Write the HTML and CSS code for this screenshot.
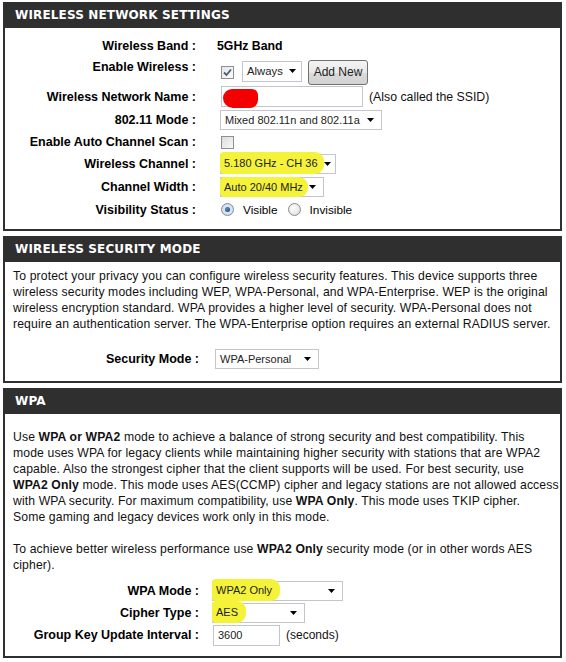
FILE: index.html
```
<!DOCTYPE html>
<html>
<head>
<meta charset="utf-8">
<link rel="stylesheet" href="styles.css">
</head>
<body>
<div class="page">

  <div class="section">
    <div class="head">WIRELESS NETWORK SETTINGS</div>
    <div class="body body-net">
      <div class="row h22">
        <div class="lbl">Wireless Band :</div>
        <div class="val"><b class="band">5GHz Band</b></div>
      </div>
      <div class="row h28 top">
        <div class="lbl lbl-top">Enable Wireless :</div>
        <div class="val val-enable">
          <span class="cb checked"><svg width="9" height="9" viewBox="0 0 9 9"><path d="M1 4.5 L3.5 7 L8 1.5" fill="none" stroke="#4a5a78" stroke-width="1.8"/></svg></span>
          <span class="sel w-always"><span class="t">Always</span><svg class="arr" width="7" height="4" viewBox="0 0 7 4"><path d="M0 0H7L3.5 4Z" fill="#000"/></svg></span>
          <span class="btn">Add New</span>
        </div>
      </div>
      <div class="row h23">
        <div class="lbl">Wireless Network Name :</div>
        <div class="val">
          <span class="inp w-ssid"><span class="redact"></span></span>
          <span class="note">(Also called the SSID)</span>
        </div>
      </div>
      <div class="row h23">
        <div class="lbl">802.11 Mode :</div>
        <div class="val">
          <span class="sel mid w-mode"><span class="t">Mixed 802.11n and 802.11a</span><svg class="arr" width="7" height="4" viewBox="0 0 7 4"><path d="M0 0H7L3.5 4Z" fill="#000"/></svg></span>
        </div>
      </div>
      <div class="row h22">
        <div class="lbl">Enable Auto Channel Scan :</div>
        <div class="val"><span class="cb"></span></div>
      </div>
      <div class="row h22">
        <div class="lbl">Wireless Channel :</div>
        <div class="val">
          <span class="sel mid w-chan"><span class="t hl hl-chan">5.180 GHz - CH 36</span><svg class="arr" width="7" height="4" viewBox="0 0 7 4"><path d="M0 0H7L3.5 4Z" fill="#000"/></svg></span>
        </div>
      </div>
      <div class="row h23">
        <div class="lbl">Channel Width :</div>
        <div class="val">
          <span class="sel mid w-width"><span class="t hl hl-width">Auto 20/40 MHz</span><svg class="arr" width="7" height="4" viewBox="0 0 7 4"><path d="M0 0H7L3.5 4Z" fill="#000"/></svg></span>
        </div>
      </div>
      <div class="row h23">
        <div class="lbl">Visibility Status :</div>
        <div class="val val-radio">
          <span class="rb checked"><span class="dot"></span></span><span class="rtxt">Visible</span>
          <span class="rb"></span><span class="rtxt">Invisible</span>
        </div>
      </div>
    </div>
  </div>

  <div class="section">
    <div class="head">WIRELESS SECURITY MODE</div>
    <div class="body body-sec">
      <p class="para para-sec">To protect your privacy you can configure wireless security features. This device supports three<br>wireless security modes including WEP, WPA-Personal, and WPA-Enterprise. WEP is the original<br>wireless encryption standard. WPA provides a higher level of security. WPA-Personal does not<br>require an authentication server. The WPA-Enterprise option requires an external RADIUS server.</p>
      <div class="row h22 row-secmode">
        <div class="lbl lbl2">Security Mode :</div>
        <div class="val val2">
          <span class="sel small w-secmode"><span class="t">WPA-Personal</span><svg class="arr" width="7" height="4" viewBox="0 0 7 4"><path d="M0 0H7L3.5 4Z" fill="#000"/></svg></span>
        </div>
      </div>
    </div>
  </div>

  <div class="section">
    <div class="head">WPA</div>
    <div class="body body-wpa">
      <p class="para para-wpa1">Use <b>WPA or WPA2</b> mode to achieve a balance of strong security and best compatibility. This<br>mode uses WPA for legacy clients while maintaining higher security with stations that are WPA2<br>capable. Also the strongest cipher that the client supports will be used. For best security, use<br><b>WPA2 Only</b> mode. This mode uses AES(CCMP) cipher and legacy stations are not allowed access<br>with WPA security. For maximum compatibility, use <b>WPA Only</b>. This mode uses TKIP cipher.<br>Some gaming and legacy devices work only in this mode.</p>
      <p class="para para-wpa2">To achieve better wireless performance use <b>WPA2 Only</b> security mode (or in other words AES<br>cipher).</p>
      <div class="row h22 row-wpamode">
        <div class="lbl lbl3">WPA Mode :</div>
        <div class="val val3">
          <span class="sel small w-wpamode"><span class="t hl hl-wpa">WPA2 Only</span><svg class="arr" width="7" height="4" viewBox="0 0 7 4"><path d="M0 0H7L3.5 4Z" fill="#000"/></svg></span>
        </div>
      </div>
      <div class="row h22">
        <div class="lbl lbl3">Cipher Type :</div>
        <div class="val val3">
          <span class="sel small w-cipher"><span class="t hl hl-aes">AES</span><svg class="arr" width="7" height="4" viewBox="0 0 7 4"><path d="M0 0H7L3.5 4Z" fill="#000"/></svg></span>
        </div>
      </div>
      <div class="row h22">
        <div class="lbl lbl3">Group Key Update Interval :</div>
        <div class="val val3">
          <span class="inp small w-gk"><span class="t">3600</span></span>
          <span class="note note-sec">(seconds)</span>
        </div>
      </div>
    </div>
  </div>

</div>
</body>
</html>
```
FILE: styles.css
```
html, body {
  margin: 0;
  padding: 0;
  background: #fff;
}
body {
  font-family: "Liberation Sans", Arial, sans-serif;
  font-size: 12px;
  color: #000;
}
.page {
  padding: 2px 4px 0 3px;
}
.section {
  margin-bottom: 5px;
}
.head {
  background: #2f2f2f;
  color: #fff;
  height: 26px;
  line-height: 27px;
  padding-left: 12px;
  font-family: "DejaVu Sans", Verdana, sans-serif;
  font-weight: bold;
  font-size: 12px;
  letter-spacing: 0.15px;
}
.body {
  border: 2px solid #2f2f2f;
  border-top: 0;
  background: #fff;
}
.body-net {
  padding: 7px 0 8px;
}
.body-sec {
  padding: 0 0 11px;
}
.body-wpa {
  padding: 0 0 10px;
}
.row {
  display: flex;
  align-items: center;
}
.h22 { height: 22px; }
.h23 { height: 23px; }
.h28 { height: 28px; }
.row.top { align-items: flex-start; }
.lbl {
  width: 191px;
  flex: none;
  text-align: right;
  font-weight: bold;
  font-size: 12.5px;
  white-space: nowrap;
}
.lbl-top {
  padding-top: 3px;
}
.lbl2, .lbl3 {
  width: 194px;
}
.val {
  margin-left: 21px;
  display: flex;
  align-items: center;
  white-space: nowrap;
}
.val2 { margin-left: 16px; }
.val3 { margin-left: 15px; }
.val-enable {
  height: 28px;
}
.band {
  font-size: 12.3px;
}
.cb {
  width: 11px;
  height: 11px;
  border: 1px solid #8e8f8f;
  background: linear-gradient(135deg, #dcdcdc, #f7f7f7);
  margin-left: 4px;
  display: flex;
  align-items: center;
  justify-content: center;
  flex: none;
}
.cb.checked {
  background: linear-gradient(135deg, #e4e6ea, #fbfbfb);
}
.sel, .inp {
  display: inline-flex;
  align-items: center;
  box-sizing: border-box;
  height: 20px;
  border: 1px solid #c2c6cc;
  background: #fff;
  font-size: 12px;
  color: #222;
}
.sel .t, .inp .t {
  padding-left: 4px;
}
.sel .arr {
  margin-left: auto;
  margin-right: 7px;
  flex: none;
}
.mid {
  font-size: 11px;
}
.small {
  font-size: 11px;
}
.w-always { width: 60px; margin-left: 8px; height: 21px; font-size: 11.3px; }
.w-always .arr { margin-right: 5px; }
.btn {
  margin-left: 6px;
  width: 60px;
  height: 25px;
  box-sizing: border-box;
  border: 1px solid #707070;
  border-radius: 3px;
  background: linear-gradient(#f4f4f4, #e8e8e8 50%, #dadada 51%, #d2d2d2);
  display: flex;
  align-items: center;
  justify-content: center;
  font-size: 12px;
  color: #222;
  margin-top: 2px;
}
.val-enable .cb {
  margin-top: 2px;
}
.w-ssid {
  width: 142px;
  margin-left: 4px;
  height: 21px;
}
.redact {
  display: block;
  width: 35px;
  height: 19px;
  margin-left: 1px;
  margin-top: 4px;
  background: #f40000;
  border-radius: 9px 6px 8px 10px;
}
.note {
  margin-left: 6px;
  font-size: 12.3px;
  color: #111;
}
.note-sec {
  margin-left: 6px;
  font-size: 12px;
}
.w-mode { width: 162px; margin-left: 3px; }
.w-chan { width: 116px; margin-left: 3px; }
.w-width { width: 104px; margin-left: 3px; }
.hl {
  align-self: stretch;
  display: flex;
  align-items: center;
  background: #f5f23a;
  border-radius: 4px 9px 9px 4px;
  margin: -3px 0 -1px -1px;
  padding-right: 6px;
}
.hl-width { margin-top: -1px; padding-right: 5px; }
.val-radio {
  padding-left: 4px;
}
.rb {
  width: 11px;
  height: 11px;
  border: 1px solid #8a8a8a;
  border-radius: 50%;
  background: radial-gradient(circle at 40% 40%, #fff, #d8d8d8);
  display: flex;
  align-items: center;
  justify-content: center;
  flex: none;
}
.rb.checked {
  background: radial-gradient(circle, #d7e4f2 55%, #bcc8d6);
}
.rb .dot {
  width: 5px;
  height: 5px;
  border-radius: 50%;
  background: radial-gradient(circle at 40% 35%, #5b8fc4, #123d6e);
}
.rtxt {
  margin-left: 9px;
  margin-right: 10px;
  font-size: 11.8px;
}
.para {
  margin: 0;
  padding-left: 8px;
  line-height: 16px;
  font-size: 12.2px;
  letter-spacing: 0.13px;
  white-space: nowrap;
  color: #111;
}
.para-sec {
  padding-top: 6px;
}
.row-secmode {
  margin-top: 16px;
}
.w-secmode { width: 104px; }
.para-wpa1 {
  padding-top: 15px;
}
.para-wpa2 {
  margin-top: 16px;
}
.row-wpamode {
  margin-top: 7px;
}
.w-wpamode { width: 131px; margin-left: -2px; }
.w-cipher { width: 93px; margin-left: -2px; }
.w-gk { width: 67px; margin-left: -1px; height: 21px; }
.hl-wpa { padding-right: 8px; }
.hl-aes { padding-right: 8px; }
```
